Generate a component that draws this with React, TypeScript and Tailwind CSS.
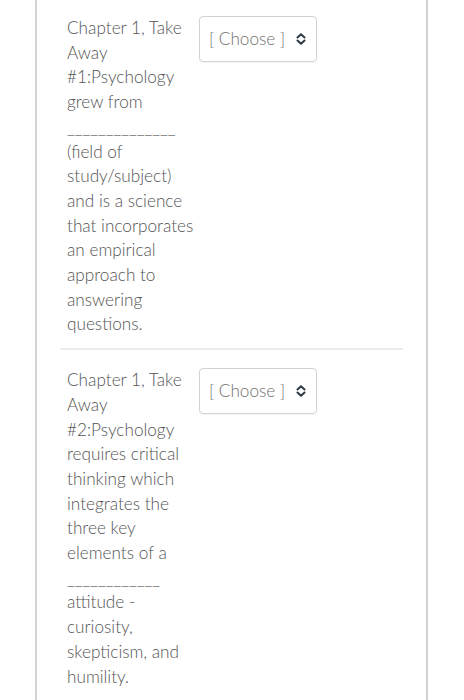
import React from 'react';

interface Item {
  id: number;
  text: string;
}

const items: Item[] = [
  {
    id: 1,
    text: 'Chapter 1, Take Away #1:Psychology grew from ______________ (field of study/subject) and is a science that incorporates an empirical approach to answering questions.',
  },
  {
    id: 2,
    text: 'Chapter 1, Take Away #2:Psychology requires critical thinking which integrates the three key elements of a ____________ attitude - curiosity, skepticism, and humility.',
  },
];

function UpDown() {
  return (
    <svg width="10" height="12" viewBox="0 0 10 12" fill="none" stroke="#2d3b45" strokeWidth="2" strokeLinecap="round" strokeLinejoin="round">
      <path d="M1.5 4.5 5 1.2 8.5 4.5" />
      <path d="M1.5 7.5 5 10.8 8.5 7.5" />
    </svg>
  );
}

function ChooseSelect() {
  return (
    <div className="flex h-[46px] w-[118px] shrink-0 items-center justify-between rounded-[4px] border border-[#cfd3d6] pl-[9px] pr-[10px] shadow-[0_1px_1px_rgba(0,0,0,0.04)]">
      <span className="text-[17.2px] font-light text-[#6f6f6f]">[ Choose ]</span>
      <UpDown />
    </div>
  );
}

export default function App() {
  return (
    <div className="h-[700px] overflow-hidden bg-white font-['Lato','Noto_Sans',sans-serif]">
      <div className="ml-[35px] h-[700px] w-[393px] border-x-2 border-[#d3d3d3] px-[23px]">
        {items.map((item, i) => (
          <div key={item.id}>
            {i > 0 && <div className="border-t-2 border-[#ececec]" />}
            <div className={`flex gap-0 px-[7px] ${i === 0 ? 'pt-[16px] pb-[11px]' : 'pt-[18px]'}`}>
              <p className="w-[132px] break-words text-[17.2px] font-light leading-[24.7px] text-[#555]">
                {item.text}
              </p>
              <div>
                <ChooseSelect />
              </div>
            </div>
          </div>
        ))}
      </div>
    </div>
  );
}
